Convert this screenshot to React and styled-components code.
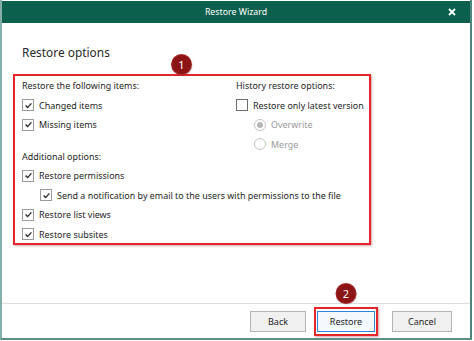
import React from 'react';
import styled, { createGlobalStyle } from 'styled-components';

const GlobalStyle = createGlobalStyle`
  body {
    margin: 0;
    background: #ffffff;
    font-family: "Noto Sans", "Open Sans", sans-serif;
    color: #1e1e1e;
  }
`;

const Window = styled.div`
  width: 472px;
  height: 340px;
  box-sizing: border-box;
  border-left: 2px solid #86aea8;
  border-right: 2px solid #4f857c;
  border-bottom: 2px solid #5f8f88;
  display: flex;
  flex-direction: column;
  background: #ffffff;
`;

const TitleBar = styled.div`
  height: 22px;
  margin-top: 1px;
  background: #0b5f4d;
  color: #ffffff;
  display: grid;
  grid-template-columns: 1fr auto 1fr;
  align-items: center;
  font-size: 8.8px;
  padding-right: 14px;
  padding-left: 14px;
`;

const Title = styled.div`
  grid-column: 2;
`;

const CloseButton = styled.div`
  grid-column: 3;
  justify-self: end;
  display: flex;
`;

const Content = styled.div`
  flex: 1;
  padding: 21px 0 0 11px;
`;

const Heading = styled.div`
  font-size: 11.9px;
  line-height: 16px;
  margin-left: 9px;
  color: #2a2a2a;
`;

const OptionsPanel = styled.div`
  position: relative;
  margin-top: 14px;
  width: 358px;
  height: 171px;
  box-sizing: border-box;
  border: 2px solid #e3262b;
  box-shadow: 1px 1px 2px rgba(120, 0, 0, 0.35);
  padding: 0 0 0 7px;
  display: grid;
  grid-template-columns: 214px 1fr;
  grid-template-areas:
    "items history"
    "additional history";
  align-content: start;
`;

const Badge = styled.div`
  position: absolute;
  width: 19px;
  height: 19px;
  border-radius: 50%;
  background: #8c1414;
  box-shadow: 0 0 0 1px #a52a2a, 1px 1px 2px rgba(0, 0, 0, 0.3);
  color: #ffffff;
  font-size: 11px;
  display: flex;
  align-items: center;
  justify-content: center;
  top: ${p => p.$top}px;
  left: ${p => p.$left};
  transform: ${p => (p.$centered ? 'translateX(-50%)' : 'none')};
`;

const Group = styled.div`
  grid-area: ${p => p.$area};
  margin-top: ${p => p.$gap || 0}px;
  display: flex;
  flex-direction: column;
`;

const Row = styled.div`
  height: 19.5px;
  display: flex;
  align-items: center;
  gap: 5px;
  font-size: 8.95px;
  white-space: nowrap;
  padding-left: ${p => (p.$indent ? 18 : 0)}px;
  color: ${p => (p.$disabled ? '#9a9a9a' : '#1e1e1e')};
`;

const Box = styled.span`
  width: 12px;
  height: 12px;
  box-sizing: border-box;
  border: 1px solid ${p => (p.$checked ? '#9a9a9a' : '#6e6e6e')};
  background: #ffffff;
  display: flex;
  align-items: center;
  justify-content: center;
  flex-shrink: 0;
`;

const Radio = styled.span`
  width: 12px;
  height: 12px;
  box-sizing: border-box;
  border-radius: 50%;
  border: 1px solid #c4c4c4;
  background: #ffffff;
  display: flex;
  align-items: center;
  justify-content: center;
  flex-shrink: 0;

  &::after {
    content: '';
    width: 6px;
    height: 6px;
    border-radius: 50%;
    background: ${p => (p.$checked ? '#b5b5b5' : 'transparent')};
  }
`;

const Footer = styled.div`
  height: 35px;
  box-sizing: border-box;
  border-top: 1px solid #dedede;
  display: flex;
  justify-content: flex-end;
  align-items: flex-start;
  padding: 3px 18px 0 0;
`;

const Button = styled.div`
  width: ${p => p.$w}px;
  height: 21px;
  box-sizing: border-box;
  margin-top: ${p => (p.$plain ? 4 : 0)}px;
  border: 1px solid ${p => (p.$primary ? '#2f86d6' : '#b4b4b4')};
  background: ${p => (p.$primary ? '#f4f9fd' : '#f0f0f0')};
  font-size: 9px;
  color: #1e1e1e;
  display: flex;
  align-items: center;
  justify-content: center;
`;

const Highlight = styled.div`
  position: relative;
  margin: 0 14px 0 8px;
  padding: 2px 1px;
  border: 2px solid #e3262b;
  box-shadow: 1px 1px 2px rgba(120, 0, 0, 0.35);
`;

const Check = () => (
  <svg width="9" height="9" viewBox="0 0 9 9">
    <path d="M1.6 4.6 L3.6 6.6 L7.4 2.4" fill="none" stroke="#2b2b2b" strokeWidth="1.4" />
  </svg>
);

const CheckRow = ({ label, checked = true, indent }) => (
  <Row $indent={indent}>
    <Box $checked={checked}>{checked && <Check />}</Box>
    {label}
  </Row>
);

export default function App() {
  return (
    <>
      <GlobalStyle />
      <Window>
        <TitleBar>
          <Title>Restore Wizard</Title>
          <CloseButton>
            <svg width="8" height="8" viewBox="0 0 8 8">
              <path d="M1 1 L7 7 M7 1 L1 7" stroke="#ffffff" strokeWidth="1.8" />
            </svg>
          </CloseButton>
        </TitleBar>
        <Content>
          <Heading>Restore options</Heading>
          <OptionsPanel>
            <Badge $top={-21} $left="157px">1</Badge>
            <Group $area="items">
              <Row>Restore the following items:</Row>
              <CheckRow label="Changed items" />
              <CheckRow label="Missing items" />
            </Group>
            <Group $area="history">
              <Row>History restore options:</Row>
              <CheckRow label="Restore only latest version" checked={false} />
              <Row $indent $disabled>
                <Radio $checked />
                Overwrite
              </Row>
              <Row $indent $disabled>
                <Radio />
                Merge
              </Row>
            </Group>
            <Group $area="additional" $gap={12}>
              <Row>Additional options:</Row>
              <CheckRow label="Restore permissions" />
              <CheckRow indent label="Send a notification by email to the users with permissions to the file" />
              <CheckRow label="Restore list views" />
              <CheckRow label="Restore subsites" />
            </Group>
          </OptionsPanel>
        </Content>
        <Footer>
          <Button $w={56} $plain>Back</Button>
          <Highlight>
            <Badge $top={-25} $left="50%" $centered>2</Badge>
            <Button $w={58} $primary>Restore</Button>
          </Highlight>
          <Button $w={60} $plain>Cancel</Button>
        </Footer>
      </Window>
    </>
  );
}
